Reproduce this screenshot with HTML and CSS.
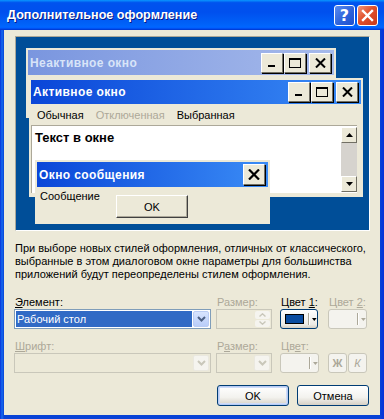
FILE: index.html
```html
<!DOCTYPE html>
<html lang="ru">
<head>
<meta charset="utf-8">
<title>Дополнительное оформление</title>
<link rel="stylesheet" href="styles.css">
</head>
<body>
<div class="win">
  <div class="titlebar">
    <span class="title">Дополнительное оформление</span>
    <span class="tbtn help">?</span>
    <span class="tbtn close"><svg width="13" height="13" viewBox="0 0 13 13"><path d="M2 2 L11 11 M11 2 L2 11" stroke="#fff" stroke-width="2.4" stroke-linecap="square"/></svg></span>
  </div>
  <div class="client">
    <div class="preview">
      <div class="pw inactive">
        <div class="cap cap-inactive">
          <span class="cap-text">Неактивное окно</span>
          <span class="cbtns">
            <span class="cb"><svg width="10" height="10" viewBox="0 0 10 10"><rect x="1" y="7" width="7" height="2" fill="#000"/></svg></span>
            <span class="cb"><svg width="12" height="10" viewBox="0 0 12 10"><rect x="0.5" y="0.5" width="11" height="9" fill="none" stroke="#000"/><rect x="0" y="0" width="12" height="2" fill="#000"/></svg></span>
            <span class="cb cb-close"><svg width="11" height="10" viewBox="0 0 11 10"><path d="M1 0.5 L10 9.5 M10 0.5 L1 9.5" stroke="#000" stroke-width="2"/></svg></span>
          </span>
        </div>
      </div>
      <div class="pw active">
        <div class="cap cap-active">
          <span class="cap-text">Активное окно</span>
          <span class="cbtns">
            <span class="cb"><svg width="10" height="10" viewBox="0 0 10 10"><rect x="1" y="7" width="7" height="2" fill="#000"/></svg></span>
            <span class="cb"><svg width="12" height="10" viewBox="0 0 12 10"><rect x="0.5" y="0.5" width="11" height="9" fill="none" stroke="#000"/><rect x="0" y="0" width="12" height="2" fill="#000"/></svg></span>
            <span class="cb cb-close"><svg width="11" height="10" viewBox="0 0 11 10"><path d="M1 0.5 L10 9.5 M10 0.5 L1 9.5" stroke="#000" stroke-width="2"/></svg></span>
          </span>
        </div>
        <div class="menu">
          <span class="mi">Обычная</span>
          <span class="mi mi-dis">Отключенная</span>
          <span class="mi">Выбранная</span>
        </div>
        <div class="textarea">
          <div class="tx">Текст в окне</div>
          <div class="sb">
            <span class="sbb"><svg width="7" height="4" viewBox="0 0 7 4"><path d="M3.5 0 L7 4 L0 4 Z" fill="#000"/></svg></span>
            <span class="track"></span>
            <span class="sbb"><svg width="7" height="4" viewBox="0 0 7 4"><path d="M0 0 L7 0 L3.5 4 Z" fill="#000"/></svg></span>
          </div>
        </div>
      </div>
      <div class="pw msg">
        <div class="cap cap-active">
          <span class="cap-text">Окно сообщения</span>
          <span class="cbtns">
            <span class="cb cb-msg"><svg width="12" height="11" viewBox="0 0 12 11"><path d="M1 0.5 L11 10.5 M11 0.5 L1 10.5" stroke="#000" stroke-width="2.2"/></svg></span>
          </span>
        </div>
        <div class="msgbody">
          <span class="msgtext">Сообщение</span>
          <span class="pokbtn">OK</span>
        </div>
      </div>
    </div>

    <p class="note">При выборе новых стилей оформления, отличных от классического,<br>выбранные в этом диалоговом окне параметры для большинства<br>приложений будут переопределены стилем оформления.</p>

    <div class="row labels">
      <span class="c1 lbl"><u>Э</u>лемент:</span>
      <span class="c2 lbl dis">Размер:</span>
      <span class="c3 lbl">Цвет <u>1</u>:</span>
      <span class="c4 lbl dis">Цвет <u>2</u>:</span>
    </div>
    <div class="row ctrls">
      <span class="c1 combo">
        <span class="combo-sel">Рабочий стол</span>
        <span class="ddbtn"><svg width="9" height="6" viewBox="0 0 9 6"><path d="M1 1 L4.5 4.5 L8 1" fill="none" stroke="#4D6185" stroke-width="2"/></svg></span>
      </span>
      <span class="c2 spin">
        <span class="spin-field"></span>
        <span class="spin-btns">
          <span class="sp"><svg width="7" height="4" viewBox="0 0 7 4"><path d="M0.5 3.5 L3.5 0.8 L6.5 3.5" fill="none" stroke="#C9C7BA" stroke-width="1.4"/></svg></span>
          <span class="sp"><svg width="7" height="4" viewBox="0 0 7 4"><path d="M0.5 0.5 L3.5 3.2 L6.5 0.5" fill="none" stroke="#C9C7BA" stroke-width="1.4"/></svg></span>
        </span>
      </span>
      <span class="c3 colorbtn">
        <span class="swatch"></span>
        <span class="sep"></span>
        <svg class="tri" width="5" height="3" viewBox="0 0 5 3"><path d="M0 0 L5 0 L2.5 3 Z" fill="#000"/></svg>
      </span>
      <span class="c4 colorbtn colorbtn-dis">
        <span class="swatch swatch-dis"></span>
        <span class="sep"></span>
        <svg class="tri" width="5" height="3" viewBox="0 0 5 3"><path d="M0 0 L5 0 L2.5 3 Z" fill="#ACA899"/></svg>
      </span>
    </div>

    <div class="row labels labels2">
      <span class="c1 lbl dis"><u>Ш</u>рифт:</span>
      <span class="c2 lbl dis">Р<u>а</u>змер:</span>
      <span class="c3 lbl dis">Цв<u>е</u>т:</span>
    </div>
    <div class="row ctrls">
      <span class="c1 combo combo-dis">
        <span class="combo-field"></span>
        <span class="ddbtn ddbtn-dis"><svg width="9" height="6" viewBox="0 0 9 6"><path d="M1 1 L4.5 4.5 L8 1" fill="none" stroke="#C9C7BA" stroke-width="2"/></svg></span>
      </span>
      <span class="c2 combo combo-dis">
        <span class="combo-field"></span>
        <span class="ddbtn ddbtn-dis"><svg width="9" height="6" viewBox="0 0 9 6"><path d="M1 1 L4.5 4.5 L8 1" fill="none" stroke="#C9C7BA" stroke-width="2"/></svg></span>
      </span>
      <span class="c3b colorbtn colorbtn-dis">
        <span class="swatch swatch-dis"></span>
        <span class="sep"></span>
        <svg class="tri" width="5" height="3" viewBox="0 0 5 3"><path d="M0 0 L5 0 L2.5 3 Z" fill="#ACA899"/></svg>
      </span>
      <span class="fbtn fbtn-b">Ж</span>
      <span class="fbtn fbtn-i">К</span>
    </div>

    <div class="actions">
      <span class="btn btn-default">OK</span>
      <span class="btn">Отмена</span>
    </div>
  </div>
</div>
</body>
</html>
```

FILE: styles.css
```css
* { box-sizing: border-box; }
html, body { margin: 0; padding: 0; }
body {
  width: 384px;
  height: 419px;
  overflow: hidden;
  font-family: "Liberation Sans", Arial, sans-serif;
  font-size: 11px;
  color: #000;
  background: #fff;
}

.win {
  width: 384px;
  height: 419px;
  display: flex;
  flex-direction: column;
  background: linear-gradient(to right, #0831D9 0, #166AEE 2px, #0842D6 4px, #0842D6 calc(100% - 4px), #0831D9 100%);
}

.titlebar {
  height: 30px;
  flex: none;
  display: flex;
  align-items: center;
  padding: 0 6px 0 7px;
  background: linear-gradient(to bottom, #0997FF 0%, #0053EE 9%, #0050EE 40%, #0062F8 80%, #0066FF 90%, #005BFF 94%, #003DD7 97%, #003DD7 100%);
}
.title {
  flex: 1;
  color: #fff;
  font-weight: bold;
  font-size: 12.6px;
  text-shadow: 1px 1px 0 #0A1883;
}
.tbtn {
  width: 21px;
  height: 21px;
  border: 1px solid #fff;
  border-radius: 3px;
  display: flex;
  align-items: center;
  justify-content: center;
  margin-left: 2px;
}
.help {
  background: linear-gradient(135deg, #5A8CF0 0%, #2D63DB 55%, #1D4FCF 100%);
  color: #fff;
  font-weight: bold;
  font-size: 16px;
  font-family: "DejaVu Sans", sans-serif;
}
.close {
  background: linear-gradient(135deg, #F0977A 0%, #E1502C 45%, #C8381A 100%);
}

.client {
  flex: 1;
  margin: 0 4px 4px 4px;
  background: #ECE9D8;
  padding: 6px 0 0 10px;
  display: flex;
  flex-direction: column;
}

/* preview */
.preview {
  position: relative;
  margin-left: 1px;
  width: 355px;
  height: 195px;
  flex: none;
  background: #004E98;
  border: 1px solid;
  border-color: #ACA899 #FFFFFF #FFFFFF #ACA899;
  overflow: hidden;
}
.pw {
  position: absolute;
  background: #ECE9D8;
  padding: 2px;
  display: flex;
  flex-direction: column;
}
.inactive { left: 10px; top: 11px; width: 310px; height: 70px; }
.active { left: 13px; top: 41px; width: 334px; height: 119px; }
.msg { left: 19px; top: 123px; width: 235px; height: 64px; }

.cap {
  display: flex;
  align-items: center;
  height: 25px;
  flex: none;
  padding: 0 3px 0 2px;
}
.active .cap { height: 24px; }
.cap-inactive { background: linear-gradient(to right, #7A96DF, #A6BAEB); }
.cap-inactive .cap-text { color: #D8E4F8; }
.cap-active { background: linear-gradient(to right, #0A46D8, #3A8CF6); }
.cap-text {
  flex: 1;
  color: #fff;
  font-weight: bold;
  font-size: 12px;
  letter-spacing: 0.4px;
}
.cbtns { display: flex; }
.cb {
  width: 22px;
  height: 20px;
  background: #ECE9D8;
  border: 1px solid;
  border-color: #FFFFFF #716F64 #716F64 #FFFFFF;
  box-shadow: 1px 1px 0 #000;
  display: flex;
  align-items: center;
  justify-content: center;
  margin-left: 1px;
}
.cb-close { margin-left: 3px; }
.cb-msg { width: 22px; height: 21px; margin-left: 0; }

.menu {
  height: 21px;
  flex: none;
  display: flex;
  align-items: center;
  padding-left: 6px;
  gap: 12px;
}
.mi-dis { color: #ACA899; }

.textarea {
  flex: none;
  height: 68px;
  margin-right: 4px;
  background: #fff;
  border-top: 1px solid #ACA899;
  border-left: 1px solid #ACA899;
  display: flex;
}
.tx {
  flex: 1;
  font-weight: bold;
  font-size: 13px;
  padding: 4px 0 0 3px;
}
.sb {
  width: 16px;
  display: flex;
  flex-direction: column;
  padding: 1px 0;
}
.sbb {
  width: 16px;
  height: 16px;
  background: #ECE9D8;
  border: 1px solid;
  border-color: #FFFFFF #716F64 #716F64 #FFFFFF;
  display: flex;
  align-items: center;
  justify-content: center;
}
.track { flex: 1; background: #D6D3CE; }

.msgbody {
  flex: 1;
  display: flex;
  align-items: flex-start;
  padding-left: 3px;
}
.msgtext { width: 76px; padding-top: 3px; }
.pokbtn {
  margin-top: 8px;
  width: 72px;
  height: 23px;
  display: flex;
  align-items: center;
  justify-content: center;
  background: #ECE9D8;
  border: 1px solid;
  border-color: #FFFFFF #404040 #404040 #FFFFFF;
  box-shadow: inset -1px -1px 0 #ACA899;
}

/* note */
.note {
  margin: 11px 0 0 1px;
  line-height: 13px;
  flex: none;
}

/* rows */
.row { display: flex; flex: none; }
.labels { margin-top: 15px; line-height: 13px; height: 13px; }
.labels2 { margin-top: 11px; }
.lbl { padding-left: 1px; }
.lbl u { text-decoration: underline; }
.dis { color: #ACA899; }
.c1 { width: 197px; }
.c2 { width: 56px; margin-left: 5px; }
.c3 { width: 38px; margin-left: 8px; }
.c3b { width: 39px; margin-left: 8px; }
.c4 { width: 39px; margin-left: 10px; }
.labels .c3 { width: 48px; }
.labels .c4 { margin-left: 0; }

.ctrls { height: 20px; }
.combo {
  display: flex;
  height: 20px;
  border: 1px solid #7F9DB9;
  background: #fff;
  padding: 1px;
}
.combo-sel {
  flex: 1;
  background: #316AC5;
  color: #fff;
  padding-left: 1px;
  line-height: 16px;
}
.ddbtn {
  width: 16px;
  margin-left: 1px;
  background: linear-gradient(to bottom, #D8E4FE, #B9CDF9);
  border: 1px solid #BACCF4;
  border-radius: 2px;
  display: flex;
  align-items: center;
  justify-content: center;
}
.combo-dis { border-color: #C9C7BA; background: #ECE9D8; }
.combo-field { flex: 1; }
.ddbtn-dis { background: #F5F4EF; border-color: #EAE8DF; }

.spin {
  display: flex;
  height: 20px;
  border: 1px solid #C9C7BA;
  background: #ECE9D8;
  padding: 1px;
}
.spin-field { flex: 1; }
.spin-btns { width: 15px; display: flex; flex-direction: column; gap: 1px; }
.sp {
  flex: 1;
  background: #F5F4EF;
  border-radius: 2px;
  display: flex;
  align-items: center;
  justify-content: center;
}

.colorbtn {
  height: 20px;
  display: flex;
  align-items: center;
  border: 1px solid #003C74;
  border-radius: 3px;
  background: linear-gradient(to bottom, #FFFFFF, #ECEBE6 80%, #D6D0C5);
  padding-left: 4px;
}
.swatch {
  width: 21px;
  height: 10px;
  background: #0A4CA0;
  border: 1px solid #000;
}
.sep {
  width: 1px;
  height: 12px;
  margin-left: 4px;
  background: #ACA899;
  border-right: 1px solid #fff;
  box-sizing: content-box;
}
.tri { margin-left: 2px; }
.colorbtn-dis {
  border-color: #C9C7BA;
  background: #F4F3EE;
}
.swatch-dis { border-color: transparent; background: transparent; }

.fbtn {
  width: 19px;
  height: 20px;
  border: 1px solid #C9C7BA;
  border-radius: 3px;
  background: #F4F3EE;
  color: #ACA899;
  display: flex;
  align-items: center;
  justify-content: center;
  font-size: 11px;
}
.fbtn-b { margin-left: 9px; font-weight: bold; }
.fbtn-i { margin-left: 1px; font-style: italic; }

.actions {
  margin-top: 12px;
  display: flex;
  justify-content: flex-end;
  gap: 8px;
  padding-right: 11px;
}
.btn {
  width: 72px;
  height: 21px;
  border: 1px solid #003C74;
  border-radius: 3px;
  background: linear-gradient(to bottom, #FFFFFF, #F3F2EE 60%, #D6D0C5);
  display: flex;
  align-items: center;
  justify-content: center;
}
.btn-default {
  box-shadow: inset 0 0 0 1px #B6CBF4, inset 0 0 0 2px #CEDBF8;
}
```
